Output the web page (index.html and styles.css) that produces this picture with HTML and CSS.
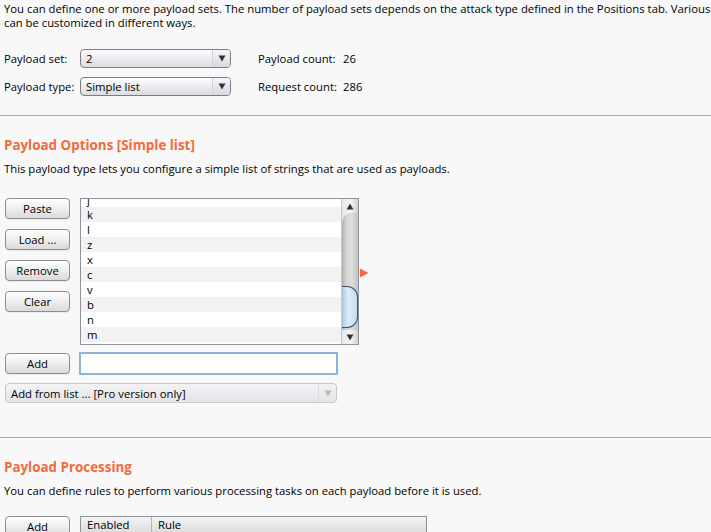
FILE: index.html
```html
<!DOCTYPE html>
<html>
<head>
<meta charset="utf-8">
<link rel="stylesheet" href="styles.css">
</head>
<body>
<div class="page">
  <section class="intro">
    <p class="line">You can define one or more payload sets. The number of payload sets depends on the attack type defined in the Positions tab. Various</p>
    <p class="line">can be customized in different ways.</p>
  </section>

  <section class="fields">
    <div class="field">
      <span class="flabel">Payload set:</span>
      <div class="select"><span class="sval">2</span><span class="sarrow"><svg width="8" height="7" viewBox="0 0 8 7"><path d="M0.5 0.5h7L4 6.5z" fill="#333"/></svg></span></div>
      <span class="clabel">Payload count:</span><span class="cval">26</span>
    </div>
    <div class="field">
      <span class="flabel">Payload type:</span>
      <div class="select"><span class="sval">Simple list</span><span class="sarrow"><svg width="8" height="7" viewBox="0 0 8 7"><path d="M0.5 0.5h7L4 6.5z" fill="#333"/></svg></span></div>
      <span class="clabel">Request count:</span><span class="cval">286</span>
    </div>
  </section>

  <hr class="sep sep-1">

  <section class="opts">
    <h2 class="heading">Payload Options [Simple list]</h2>
    <p class="desc">This payload type lets you configure a simple list of strings that are used as payloads.</p>

    <div class="listarea">
      <div class="btncol">
        <button class="btn">Paste</button>
        <button class="btn">Load ...</button>
        <button class="btn">Remove</button>
        <button class="btn">Clear</button>
      </div>
      <div class="listbox">
        <div class="items">
          <div class="item">j</div>
          <div class="item alt">k</div>
          <div class="item">l</div>
          <div class="item alt">z</div>
          <div class="item">x</div>
          <div class="item alt">c</div>
          <div class="item">v</div>
          <div class="item alt">b</div>
          <div class="item">n</div>
          <div class="item alt">m</div>
        </div>
        <div class="vscroll">
          <div class="sbtn"><svg width="8" height="7" viewBox="0 0 8 7"><path d="M4 0.5L7.5 6.5h-7z" fill="#333"/></svg></div>
          <div class="track"><div class="thumb"></div></div>
          <div class="sbtn"><svg width="8" height="7" viewBox="0 0 8 7"><path d="M0.5 0.5h7L4 6.5z" fill="#333"/></svg></div>
        </div>
      </div>
      <div class="marker"><svg width="9" height="10" viewBox="0 0 9 10"><path d="M0 0.5L8.5 5L0 9.5z" fill="#ff6633"/></svg></div>
    </div>

    <div class="addrow">
      <button class="btn">Add</button>
      <div class="input"></div>
    </div>
    <div class="fromlist"><span class="sval">Add from list ... [Pro version only]</span><span class="farrow"><svg width="8" height="7" viewBox="0 0 8 7"><path d="M0.5 0.5h7L4 6.5z" fill="#b8b8b8"/></svg></span></div>
  </section>

  <hr class="sep sep-2">

  <section class="proc">
    <h2 class="heading">Payload Processing</h2>
    <p class="desc">You can define rules to perform various processing tasks on each payload before it is used.</p>
    <div class="procrow">
      <button class="btn">Add</button>
      <div class="table">
        <div class="thead"><span class="th th-en">Enabled</span><span class="th">Rule</span></div>
      </div>
    </div>
  </section>
</div>
</body>
</html>
```

FILE: styles.css
```css
html, body {
  margin: 0;
  padding: 0;
  background: #f8f8f8;
  overflow: hidden;
}
body {
  width: 711px;
  height: 532px;
  font-family: "Open Sans", "DejaVu Sans", sans-serif;
  font-size: 11.3px;
  color: #000;
}
.page {
  display: flex;
  flex-direction: column;
}
p { margin: 0; }

.intro {
  padding: 2px 0 0 4px;
  overflow: hidden;
}
.line {
  line-height: 14px;
  white-space: nowrap;
}

.fields {
  display: flex;
  flex-direction: column;
  gap: 9px;
  margin-top: 19px;
  padding-left: 4px;
}
.field {
  display: flex;
  align-items: center;
  height: 19px;
}
.flabel { width: 76px; }
.select {
  width: 149px;
  height: 17px;
  border: 1px solid #7d7d7d;
  border-radius: 4px;
  background: linear-gradient(#fefefe, #e9e9ee 55%, #dcdce2);
  display: flex;
  align-items: center;
}
.sval {
  flex: 1;
  padding-left: 5px;
  line-height: 17px;
}
.sarrow {
  width: 17px;
  height: 17px;
  display: flex;
  align-items: center;
  justify-content: center;
  background: linear-gradient(#f6f7fb, #d4d8e2);
  border-radius: 0 3px 3px 0;
  border-left: 1px solid #d2d2d8;
}
.clabel {
  margin-left: 27px;
  width: 85px;
}

.sep {
  border: 0;
  height: 1px;
  background: #aaaab2;
  margin: 0;
  width: 100%;
}
.sep-1 { margin-top: 19px; }

.heading {
  margin: 0;
  font-size: 13.4px;
  font-weight: bold;
  color: #f26a3d;
  line-height: 16px;
  padding-left: 4px;
}
.desc {
  padding-left: 4px;
  line-height: 14px;
}
.opts .heading { margin-top: 21px; }
.opts .desc { margin-top: 9px; }

.listarea {
  display: flex;
  margin-top: 22px;
  padding-left: 5px;
}
.btncol {
  display: flex;
  flex-direction: column;
  gap: 10px;
  width: 65px;
}
.btn {
  width: 65px;
  height: 21px;
  padding: 0;
  border: 1px solid #8e8e8e;
  border-radius: 4px;
  background: linear-gradient(#ffffff, #f0f0f0 45%, #dadada);
  font-family: inherit;
  font-size: 11.3px;
  color: #000;
  box-shadow: 0 1px 0 rgba(0,0,0,0.06);
}
.listbox {
  margin-left: 10px;
  width: 277px;
  height: 145px;
  border: 1px solid #8f939b;
  background: #fff;
  display: flex;
  overflow: hidden;
}
.items {
  flex: 1;
  margin-top: -7px;
}
.item {
  height: 15px;
  line-height: 15px;
  padding-left: 6px;
  background: #fff;
}
.item.alt { background: #f2f2f2; }
.vscroll {
  width: 16px;
  display: flex;
  flex-direction: column;
  border-left: 1px solid #c8c8c8;
  background: linear-gradient(90deg, #e2e2e2, #f0f0f0 40%, #c7c7c7);
}
.sbtn {
  height: 14px;
  display: flex;
  align-items: center;
  justify-content: center;
  background: linear-gradient(90deg, #e8e8e8, #f6f6f6 50%, #d0d0d0);
}
.track {
  flex: 1;
  display: flex;
  flex-direction: column;
  justify-content: flex-end;
  padding-bottom: 2px;
  border-radius: 10px 0 0 0;
  background: linear-gradient(90deg, #b0b0b0, #d6d6d6 30%, #dedede 60%, #c2c2c2);
}
.thumb {
  height: 40px;
  border: 1px solid #3f5468;
  border-left: 0;
  border-radius: 0 11px 11px 0;
  background: linear-gradient(90deg, #a9c8e2, #dcecf8 40%, #c5ddf0);
}
.marker {
  margin-left: 1px;
  margin-top: 68px;
  height: 10px;
}

.addrow {
  display: flex;
  align-items: center;
  margin-top: 7px;
  padding-left: 5px;
  gap: 9px;
}
.input {
  width: 255px;
  height: 19px;
  background: #fff;
  border: 2px solid #8db2d8;
  border-radius: 1px;
}
.fromlist {
  margin: 8px 0 0 5px;
  width: 330px;
  height: 18px;
  border: 1px solid #c8c8cc;
  border-radius: 4px;
  background: linear-gradient(#f3f3f5, #e4e4e8);
  display: flex;
  align-items: center;
}
.farrow {
  width: 17px;
  height: 18px;
  display: flex;
  align-items: center;
  justify-content: center;
  border-left: 1px solid #dadade;
}

.sep-2 { margin-top: 34px; }
.proc .heading { margin-top: 21px; }
.proc .desc { margin-top: 9px; }
.procrow {
  display: flex;
  margin-top: 18px;
  padding-left: 5px;
  gap: 10px;
}
.table {
  width: 345px;
  height: 30px;
  border: 1px solid #8f939b;
  border-bottom: 0;
  background: #fff;
}
.thead {
  display: flex;
  height: 16px;
  background: linear-gradient(#f4f4f4, #dcdcdc);
  border-bottom: 1px solid #a8a8a8;
}
.th {
  padding-left: 6px;
  line-height: 16px;
}
.th-en {
  width: 64px;
  border-right: 1px solid #b4b4b4;
}
```
